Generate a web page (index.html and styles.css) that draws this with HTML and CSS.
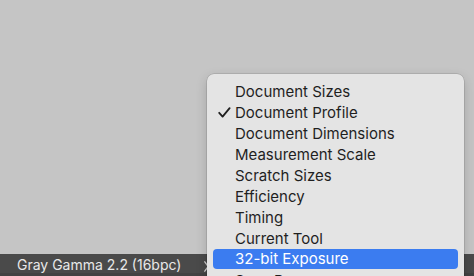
FILE: index.html
```html
<!DOCTYPE html>
<html>
<head>
<meta charset="utf-8">
<link rel="stylesheet" href="styles.css">
</head>
<body>
<div class="page">
  <div class="canvas"></div>
  <div class="statusbar">
    <span class="status-text">Gray Gamma 2.2 (16bpc)</span>
    <span class="chevron">
      <svg width="5" height="11" viewBox="0 0 5 11"><path d="M0.8 0.8 L4.2 5.5 L0.8 10.2" fill="none" stroke="#d0d0d0" stroke-width="1.3" stroke-linecap="round" stroke-linejoin="round"/></svg>
    </span>
  </div>
</div>
<div class="menu">
  <div class="item">Document Sizes</div>
  <div class="item checked">
    <svg class="check" width="13" height="11" viewBox="0 0 13 11"><path d="M1.2 5.8 L4.6 9.6 L11.6 1.2" fill="none" stroke="#1f1f1f" stroke-width="1.8" stroke-linecap="round" stroke-linejoin="round"/></svg>
    Document Profile
  </div>
  <div class="item">Document Dimensions</div>
  <div class="item">Measurement Scale</div>
  <div class="item">Scratch Sizes</div>
  <div class="item">Efficiency</div>
  <div class="item">Timing</div>
  <div class="item">Current Tool</div>
  <div class="item selected">32-bit Exposure</div>
  <div class="item">Save Progress</div>
</div>
</body>
</html>
```

FILE: styles.css
```css
html, body {
  margin: 0;
  padding: 0;
  width: 474px;
  height: 276px;
  overflow: hidden;
  background: #c5c5c5;
  font-family: "Inter", "Liberation Sans", sans-serif;
}

.page {
  display: flex;
  flex-direction: column;
  width: 474px;
  height: 276px;
}

.canvas {
  flex: 1;
  background: #c5c5c5;
}

.statusbar {
  height: 22px;
  background: #4a4a4a;
  display: flex;
  align-items: center;
  padding-left: 17px;
  box-shadow: inset 0 -3px 0 #434343;
}

.status-text {
  color: #e8e8e8;
  font-size: 14px;
  line-height: 22px;
}

.chevron {
  margin-left: 23px;
  display: flex;
  align-items: center;
  padding-top: 2px;
}

.menu {
  position: absolute;
  left: 207px;
  top: 74px;
  width: 245px;
  height: 230px;
  padding: 7px 6px 0 6px;
  background: #e4e4e4;
  border-radius: 7px;
  box-shadow: 0 0 0 0.5px rgba(0,0,0,0.18), 0 4px 12px rgba(0,0,0,0.18);
}

.item {
  position: relative;
  height: 21px;
  line-height: 21px;
  padding-left: 22px;
  font-size: 15px;
  color: #1f1f1f;
  border-radius: 4px;
  white-space: nowrap;
}

.item.selected {
  background: #3b7cf0;
  color: #ffffff;
  height: 20px;
  line-height: 20px;
  margin-bottom: 1px;
}

.check {
  position: absolute;
  left: 5px;
  top: 5px;
}
```
